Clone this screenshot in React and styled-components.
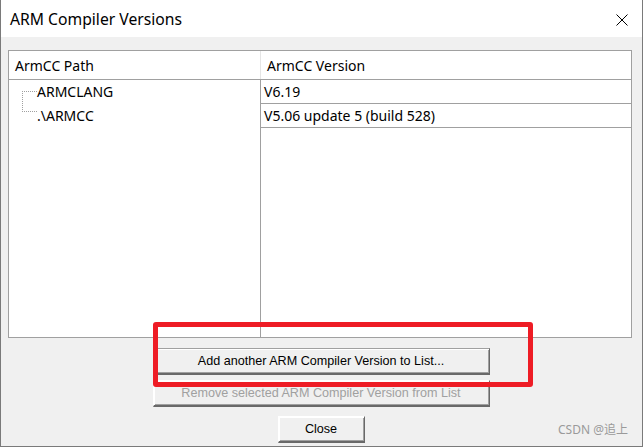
import React from 'react'
import styled, { createGlobalStyle } from 'styled-components'

const GlobalStyle = createGlobalStyle`
	html, body {
		margin: 0;
		padding: 0;
		background: #6b6b6b;
	}
	* {
		box-sizing: border-box;
	}
`

const Window = styled.div`
	position: relative;
	width: 643px;
	height: 447px;
	display: flex;
	flex-direction: column;
	background: #f0f0f0;
	border-left: 1px solid #7a7a7a;
	border-right: 1px solid #7a7a7a;
	border-bottom: 1px solid #7a7a7a;
	overflow: hidden;
`

const TitleBar = styled.div`
	height: 37px;
	flex: none;
	display: flex;
	align-items: center;
	justify-content: space-between;
	background: #ffffff;
	padding: 0 14px 0 9px;
`

const Title = styled.span`
	font-family: 'Noto Sans', 'Open Sans', sans-serif;
	font-size: 15.7px;
	color: #000;
`

const CloseGlyph = styled.svg`
	width: 12px;
	height: 12px;
	margin-top: 2px;
`

const Body = styled.div`
	flex: 1;
	display: flex;
	flex-direction: column;
	padding: 13px 10px 0 7px;
`

const ListBox = styled.div`
	height: 288px;
	display: flex;
	flex-direction: column;
	background: #fff;
	border: 1px solid #a0a0a0;
	font-family: 'Noto Sans', 'Open Sans', sans-serif;
	font-size: 14px;
	color: #000;
`

const Columns = styled.div`
	display: grid;
	grid-template-columns: 252px 1fr;
	flex: ${(p) => (p.$grow ? 1 : 'none')};
	height: ${(p) => (p.$grow ? 'auto' : '29px')};
	border-bottom: ${(p) => (p.$grow ? 'none' : '1px solid #a0a0a0')};
`

const HeaderCell = styled.div`
	display: flex;
	align-items: center;
	padding-left: 6px;
	border-right: ${(p) => (p.$divider ? '1px solid #e5e5e5' : 'none')};
`

const TreeColumn = styled.div`
	position: relative;
	border-right: 1px solid #a0a0a0;
	padding-left: 28px;
`

const TreeLines = styled.div`
	position: absolute;
	left: 13px;
	top: 11px;
	width: 15px;
	height: 21px;
	border-left: 1px dotted #a0a0a0;
	border-top: 1px dotted #a0a0a0;
	border-bottom: 1px dotted #a0a0a0;
`

const TreeItem = styled.div`
	height: 24px;
	line-height: 23px;
`

const VersionColumn = styled.div`
	display: flex;
	flex-direction: column;
`

const VersionRow = styled.div`
	height: 24px;
	line-height: 23px;
	padding-left: 3px;
	border-bottom: 1px solid #a0a0a0;
`

const ButtonStack = styled.div`
	display: flex;
	flex-direction: column;
	align-items: center;
	padding-top: 10px;
	padding-left: 2px;
`

const Button = styled.div`
	width: ${(p) => p.$width}px;
	height: 27px;
	margin-top: ${(p) => p.$gap || 0}px;
	display: flex;
	align-items: center;
	justify-content: center;
	font-family: 'Liberation Sans', Arial, sans-serif;
	font-size: 12.6px;
	color: ${(p) => (p.$disabled ? '#a0a0a0' : '#000')};
	background: #f0f0f0;
	border-top: 1px solid ${(p) => (p.$default ? '#a0a0a0' : '#ffffff')};
	border-left: 1px solid ${(p) => (p.$default ? '#696969' : '#ffffff')};
	border-right: 1px solid #696969;
	border-bottom: 2px solid #696969;
	box-shadow: inset 1px 1px 0 #ffffff, inset -1px -1px 0 #a0a0a0;
`

const Highlight = styled.div`
	position: absolute;
	left: 152px;
	top: 322px;
	width: 380px;
	height: 65px;
	border: 5px solid #ee1c25;
	border-radius: 3px;
	pointer-events: none;
`

const Watermark = styled.div`
	position: absolute;
	right: 14px;
	bottom: 8px;
	font-family: 'Noto Sans', 'Noto Sans CJK SC', sans-serif;
	font-size: 12px;
	color: #9a9a9a;
`

const paths = ['ARMCLANG', '.\\ARMCC']
const versions = ['V6.19', 'V5.06 update 5 (build 528)']

const App = () => {
	return (
		<>
			<GlobalStyle />
			<Window>
				<TitleBar>
					<Title>ARM Compiler Versions</Title>
					<CloseGlyph viewBox="0 0 12 12">
						<path d="M0.5 0.5 L11.5 11.5 M11.5 0.5 L0.5 11.5" stroke="#000" strokeWidth="1" fill="none" />
					</CloseGlyph>
				</TitleBar>
				<Body>
					<ListBox>
						<Columns>
							<HeaderCell $divider>ArmCC Path</HeaderCell>
							<HeaderCell>ArmCC Version</HeaderCell>
						</Columns>
						<Columns $grow>
							<TreeColumn>
								<TreeLines />
								{paths.map((p) => (
									<TreeItem key={p}>{p}</TreeItem>
								))}
							</TreeColumn>
							<VersionColumn>
								{versions.map((v) => (
									<VersionRow key={v}>{v}</VersionRow>
								))}
							</VersionColumn>
						</Columns>
					</ListBox>
					<ButtonStack>
						<Button $width={337} $default>
							Add another ARM Compiler Version to List...
						</Button>
						<Button $width={337} $gap={5} $disabled>
							Remove selected ARM Compiler Version from List
						</Button>
						<Button $width={87} $gap={9}>
							Close
						</Button>
					</ButtonStack>
				</Body>
				<Highlight />
				<Watermark>CSDN @追上</Watermark>
			</Window>
		</>
	)
}

export default App
